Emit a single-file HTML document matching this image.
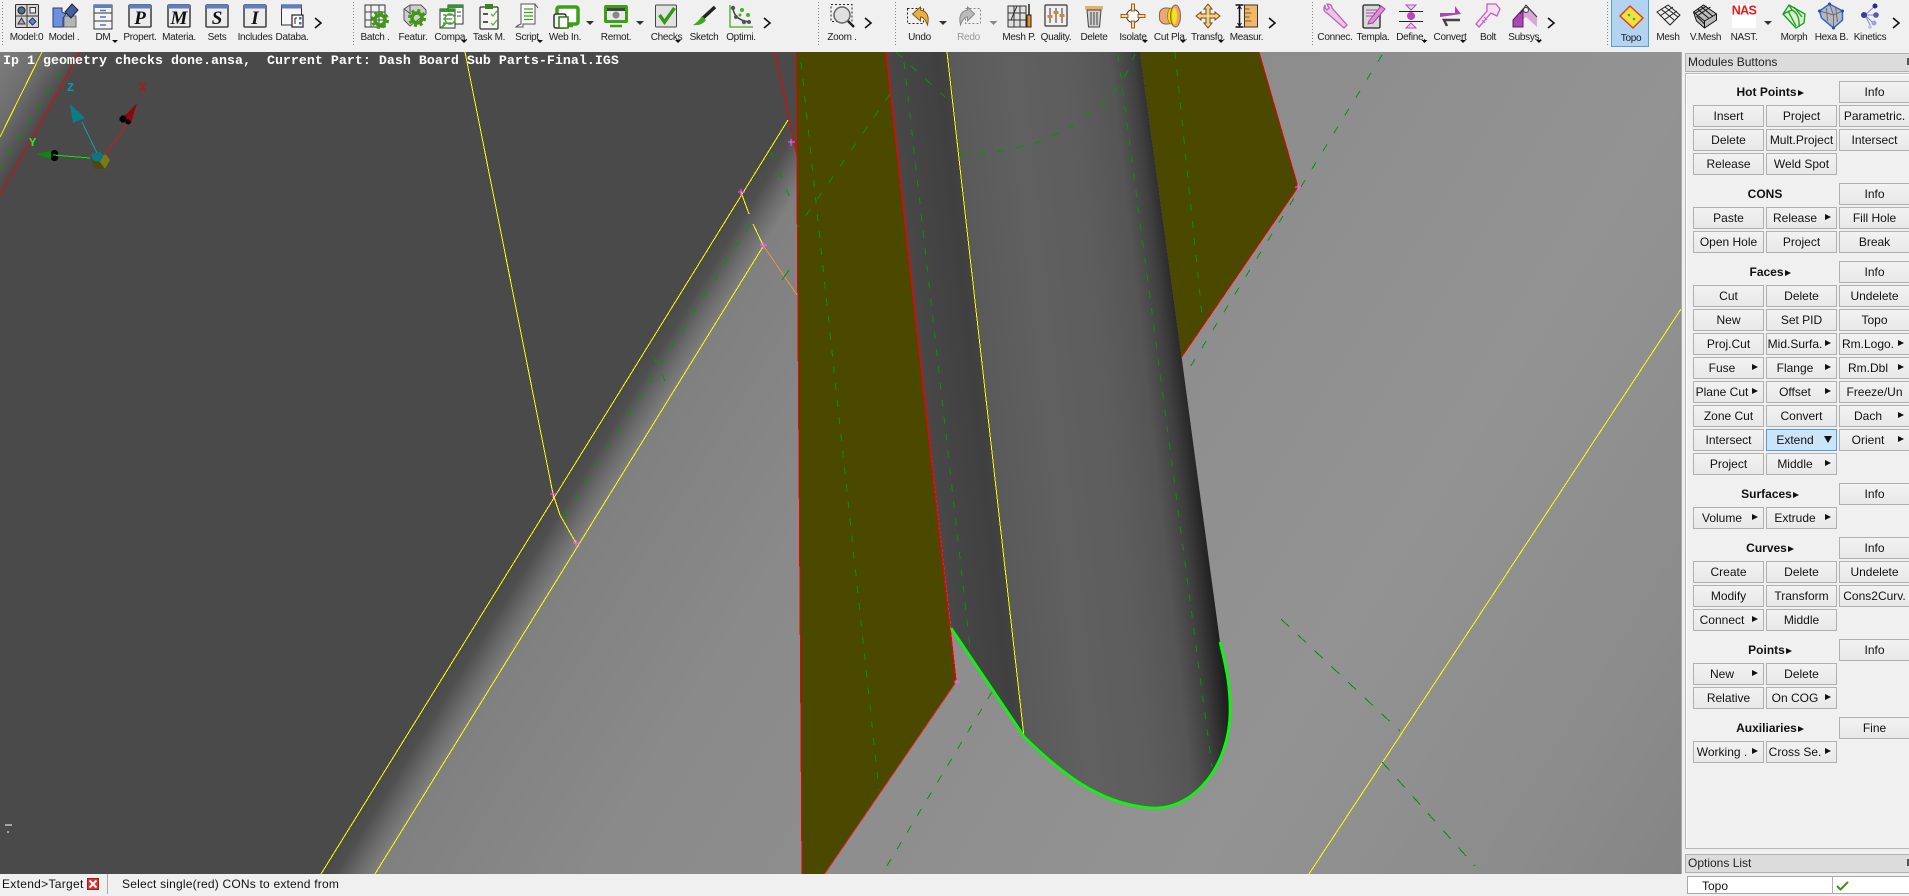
<!DOCTYPE html>
<html lang="en"><head><meta charset="utf-8"><title>ANSA</title>
<style>
html,body{margin:0;padding:0;width:1909px;height:896px;overflow:hidden;background:#f0f0f0;font-family:"Liberation Sans",sans-serif}
#tb{position:absolute;left:0;top:0;width:1909px;height:52px;background:#f0f0f0}
#tb text.l{font:10px "Liberation Sans",sans-serif;letter-spacing:-.3px;fill:#1c1c1c;text-anchor:middle}
#vp{position:absolute;left:0;top:52px;width:1681px;height:822px;overflow:hidden;background:#4a4a4a}
#msg{position:absolute;left:3px;top:2px;font:bold 13.33px/16px "Liberation Mono",monospace;color:#fff;white-space:pre}
.ax{position:absolute;font:bold 12px/12px "Liberation Mono",monospace}
#sb{position:absolute;left:0;top:874px;width:1681px;height:22px;background:#f0f0f0;font-size:12px;color:#111}
#sb span{position:absolute;top:3px;line-height:15px;white-space:nowrap}
#pn{position:absolute;left:1681px;top:52px;width:228px;height:844px;background:#f0f0f0;overflow:hidden}
.tt{position:absolute;left:4px;width:230px;height:19px;box-sizing:border-box;background:#dcdcdc;border:1px solid #b0b0b0;font-size:12px;line-height:17px;padding-left:2px;color:#222}
.fr{position:absolute;left:4px;top:21px;width:230px;height:776px;box-sizing:border-box;border:1px solid #b8b8b8;box-shadow:inset 1px 1px 0 #fff}
.x{position:absolute;box-sizing:border-box;height:22px;width:71px;border:1px solid #b0b0b0;background:linear-gradient(#f2f2f2,#e8e8e8);font-size:12px;line-height:20px;text-align:center;color:#111;white-space:nowrap;overflow:hidden}
.c1{left:12px}.c2{left:85px}.c3{left:158px}
.a{padding-right:13px}
.a::after{content:"";position:absolute;right:5px;top:6px;border-left:6px solid #111;border-top:3.5px solid transparent;border-bottom:3.5px solid transparent}
.on{background:#cce4f7;border-color:#4a9fe4}
.on::after{right:4px;top:6px;border-top:7px solid #111;border-left:4px solid transparent;border-right:4px solid transparent;border-bottom:0}
.h{position:absolute;left:12px;height:22px;font-size:12px;font-weight:bold;line-height:22px;text-align:center;color:#111;white-space:nowrap}
.h i{display:inline-block;border-left:6px solid #111;border-top:3.5px solid transparent;border-bottom:3.5px solid transparent;margin-left:1px}
</style></head><body>

<svg id="tb" width="1909" height="52" viewBox="0 0 1909 52" xmlns="http://www.w3.org/2000/svg">
<defs>
<g id="gear"><circle r="7.500" fill="none" stroke="#3f9a12" stroke-width="3" stroke-dasharray="3 2.900"/><circle r="5" fill="none" stroke="#3f9a12" stroke-width="3.500"/></g>
<path id="chev" d="M-3 -5L3 0L-3 5" fill="none" stroke="#111" stroke-width="1.600"/>
<path id="sm" d="M-3 0H3L0 3Z" fill="#111"/>
<path id="big" d="M-4 0H4L0 4Z" fill="#333"/>
</defs>
<g fill="none" stroke="#888" stroke-width="1" stroke-dasharray="1 2">
<path d="M2.500 2V46M353.500 2V46M818.500 2V46M895.500 2V46M1312.500 2V46M1607.500 2V46"/>
</g>
<!-- Model:0 -->
<g transform="translate(26.500 0)"><rect x="-11" y="4.500" width="23" height="23" rx="1" fill="#d4d4d4" stroke="#333"/><path d="M.5 4.500V27.500M-11 16H12" stroke="#333"/><circle cx="-5" cy="10.500" r="3.500" fill="#556a90" stroke="#222"/><rect x="3.500" y="7.500" width="5.500" height="5.500" fill="#eee" stroke="#333"/><path d="M-5 18L-8.500 24H-1.500Z" fill="#aaa" stroke="#333"/><path d="M6 18L9.500 21.500L6 25L2.500 21.500Z" fill="#5a86d8" stroke="#335"/></g>
<!-- Model . -->
<g transform="translate(64 0)"><path d="M0 16H12V27H0Z" fill="#b5b5b5" stroke="#666"/><path d="M-11 8H-2V12L2 14L-1 18V27H-11Z" fill="#6d8fe0" stroke="#2a3c70"/><path d="M1 12L8 4L14 10L7 18Z" fill="#40609f" stroke="#223"/></g>
<!-- DM -->
<g transform="translate(103 0)"><rect x="-9" y="5" width="18" height="24" fill="#f4f4f4" stroke="#333"/><rect x="-9" y="5" width="18" height="3" fill="#5a7fc8"/><path d="M-9 13H9M-9 21H9" stroke="#333"/><path d="M-3 10.500H3M-3 17H3M-3 25H3" stroke="#4a78c8" stroke-width="1.500"/></g>
<!-- P M S I -->
<g font-family="Liberation Serif,serif" font-weight="bold" font-style="italic" font-size="19" text-anchor="middle" fill="#111">
<g transform="translate(140 0)"><rect x="-11" y="5" width="22" height="22" rx="1" fill="#ececec" stroke="#222" stroke-width="1.300"/><rect x="-11" y="5" width="22" height="3.500" fill="#5a7fc8"/><text y="24">P</text></g>
<g transform="translate(179 0)"><rect x="-11" y="5" width="22" height="22" rx="1" fill="#ececec" stroke="#222" stroke-width="1.300"/><rect x="-11" y="5" width="22" height="3.500" fill="#5a7fc8"/><text y="24">M</text></g>
<g transform="translate(217 0)"><rect x="-11" y="5" width="22" height="22" rx="1" fill="#ececec" stroke="#222" stroke-width="1.300"/><rect x="-11" y="5" width="22" height="3.500" fill="#5a7fc8"/><text y="24">S</text></g>
<g transform="translate(255 0)"><rect x="-11" y="5" width="22" height="22" rx="1" fill="#ececec" stroke="#222" stroke-width="1.300"/><rect x="-11" y="5" width="22" height="3.500" fill="#5a7fc8"/><text y="24">I</text></g>
</g>
<!-- Databa -->
<g transform="translate(292 0)"><rect x="-10.500" y="5" width="20" height="20" fill="#f6f6f6" stroke="#333"/><rect x="-10.500" y="5" width="20" height="3.500" fill="#5a7fc8"/><rect x="0" y="15" width="11" height="12" fill="#fff" stroke="#222" stroke-width="1.200"/><path d="M3 18V24M3 18H5" stroke="#222"/><rect x="7" y="17" width="2.500" height="2.500" fill="#3a6ac8"/><rect x="7" y="22" width="2.500" height="2.500" fill="#3a6ac8"/></g>
<use href="#chev" x="318" y="23"/>
<!-- Batch -->
<g transform="translate(375 0)"><rect x="-10" y="5" width="20" height="22" fill="#f2f2f2" stroke="#333"/><path d="M-10 12H10M-10 20H10M-4 5V27M4 5V27" stroke="#444"/><use href="#gear" x="5" y="20"/></g>
<!-- Featur -->
<g transform="translate(413 0)"><path d="M-9 9L-3 5H8L13 10V14L-3 26L-9 20Z" fill="#cfcfcf" stroke="#555"/><path d="M-3 5V14M-9 9L-2 14" stroke="#555"/><use href="#gear" x="4" y="18"/></g>
<!-- Compa -->
<g transform="translate(451 0)"><rect x="-3" y="5" width="15" height="19" fill="#fff" stroke="#333"/><rect x="-3" y="5" width="15" height="3" fill="#2f9a2a"/><rect x="-11" y="9" width="15" height="19" fill="#fff" stroke="#333"/><rect x="-11" y="9" width="15" height="3" fill="#2f9a2a"/><path d="M-8 15H1M-8 19H1M-8 23H1M6 12H10M6 16H10" stroke="#444"/><circle cx="-1" cy="19" r="5" fill="none" stroke="#3fb020" stroke-width="1.500"/><path d="M-5 23L-10 28" stroke="#3fb020" stroke-width="2"/></g>
<!-- Task M -->
<g transform="translate(489 0)"><rect x="-9" y="7" width="18" height="22" rx="1" fill="#f4f4f4" stroke="#333" stroke-width="1.200"/><rect x="-4" y="4" width="8" height="5" fill="#2f8a1c"/><path d="M-6 14H-1M-6 22H-1" stroke="#222" stroke-width="1.500"/><path d="M2 14L4 16L8 11M2 23L4 25L8 20" fill="none" stroke="#5bb53a" stroke-width="1.300"/></g>
<!-- Script -->
<g transform="translate(527 0)"><path d="M-6 4H8V24H-4V27H-11Q-9 25 -6 24Z" fill="#fbfbfb" stroke="#555"/><path d="M8 4L11 8" stroke="#555"/><path d="M-3 9H6M-3 12.500H6M-3 16H6M-3 19.500H6" stroke="#3fa020" stroke-width="1.200"/></g>
<!-- Web In -->
<g transform="translate(565 0)"><rect x="-8" y="7" width="21" height="17" rx="2" fill="#fff" stroke="#3aa015" stroke-width="3.500"/><path d="M-4 26H8" stroke="#3aa015" stroke-width="2.500"/><rect x="-11" y="14" width="12" height="14" rx="2" fill="#f4f4f4" stroke="#333" stroke-width="1.500"/><rect x="-6" y="17" width="9" height="11" fill="#fff" stroke="#2b7a10" stroke-width="1.500"/></g>
<use href="#big" x="590" y="21"/>
<!-- Remot -->
<g transform="translate(616 0)"><rect x="-12" y="5" width="24" height="18" rx="2" fill="#3aa015"/><rect x="-9" y="8" width="18" height="12" fill="#e8e8e8"/><rect x="-9" y="8" width="18" height="3" fill="#444"/><circle cy="15" r="3.500" fill="#888"/><path d="M-6 26H6" stroke="#3aa015" stroke-width="2.500"/></g>
<use href="#big" x="640" y="21"/>
<!-- Checks -->
<g transform="translate(666.500 0)"><rect x="-11" y="5" width="21" height="22" rx="1" fill="#e2e2e2" stroke="#444"/><path d="M-7 15L-2 22L8 8" fill="none" stroke="#2f9a12" stroke-width="3.500"/></g>
<!-- Sketch -->
<g transform="translate(704 0)"><path d="M11 7L-1 18" stroke="#222" stroke-width="3.500"/><path d="M-2 16L2 20Q-2 26 -11 25Q-6 22 -2 16Z" fill="#3fa81c"/></g>
<!-- Optimi -->
<g transform="translate(741 0)"><path d="M-11 5V27H12" fill="none" stroke="#4aa82a" stroke-width="1.300"/><path d="M-8 9Q-6 20 8 22" fill="none" stroke="#444" stroke-width="1.500"/><g fill="#555"><circle cx="-8" cy="8" r="2.200"/><circle cx="-5" cy="17" r="2"/><circle cx="3" cy="22" r="2.200"/><circle cx="8" cy="22" r="2"/></g><g fill="#46b020"><circle cx="1" cy="10" r="2"/><circle cx="7" cy="15" r="2"/><circle cx="-1" cy="15" r="1.500"/></g></g>
<use href="#chev" x="767" y="23"/>
<!-- Zoom -->
<g transform="translate(842 0)"><rect x="-11" y="4.500" width="21" height="17" fill="none" stroke="#222" stroke-dasharray="2 2"/><path d="M5 20L12 27" stroke="#222" stroke-width="2.500"/><circle cy="15" r="8" fill="#e0e0e0" stroke="#666" stroke-width="1.500"/></g>
<use href="#chev" x="868" y="23"/>
<!-- Undo -->
<g transform="translate(919.500 0)"><rect x="-12" y="8.500" width="16" height="15" fill="none" stroke="#222" stroke-dasharray="2 2"/><path d="M-7 14L1 7V10Q11 12 8 25Q5 17 1 17V21Z" fill="#e8b040" stroke="#7a5a1a"/></g>
<use href="#big" x="943" y="21"/>
<!-- Redo -->
<g transform="translate(968.500 0)"><rect x="-3" y="8.500" width="15" height="15" fill="none" stroke="#888" stroke-dasharray="2 2"/><path d="M6 14L-1 7V10Q-11 12 -8 25Q-5 17 -1 17V21Z" fill="#bbb" stroke="#888"/></g>
<use href="#big" x="993.500" y="21" opacity=".55"/>
<!-- Mesh P -->
<g transform="translate(1019 0)"><rect x="-11" y="6" width="18" height="21" fill="#e0e0e0" stroke="#333"/><path d="M-11 13H7M-11 20H7M-5 6V27M1 6V27M-8 20L-2 6" stroke="#333"/><path d="M10 4V15" stroke="#222" stroke-width="1.500"/><rect x="8" y="15" width="4" height="12" fill="#e89020" stroke="#222"/></g>
<!-- Quality -->
<g transform="translate(1056 0)"><rect x="-11" y="5" width="22" height="21" rx="1" fill="#f0f0f0" stroke="#333" stroke-width="1.200"/><path d="M-6 8V23M0 8V23M6 8V23" stroke="#333"/><rect x="-8.500" y="15" width="5" height="3" fill="#d08838"/><rect x="-2.500" y="11" width="5" height="3" fill="#d08838"/><rect x="3.500" y="14" width="5" height="3" fill="#d08838"/></g>
<!-- Delete -->
<g transform="translate(1094 0)"><rect x="-9" y="6" width="18" height="3.500" fill="#e8b060"/><path d="M-7 10H7L5.500 27H-5.500Z" fill="#d0d0d0" stroke="#444"/><path d="M-3 12V25M0 12V25M3 12V25" stroke="#444"/></g>
<!-- Isolate -->
<g transform="translate(1133 0)"><circle cy="16" r="6.500" fill="#fff" stroke="#333"/><g fill="#f8d8a0" stroke="#a06010"><path d="M-1.500 4H1.500V11H-1.500ZM-1.500 21H1.500V28H-1.500ZM-12 14.500H-5V17.500H-12ZM5 14.500H12V17.500H5Z"/></g></g>
<!-- Cut Pla -->
<g transform="translate(1170.500 0)"><rect x="-11" y="8" width="14" height="16" rx="6" fill="#e8a878" stroke="#864"/><ellipse cx="1" cy="16" rx="4" ry="8" fill="#f4e800" stroke="#a80"/><ellipse cx="5" cy="16" rx="5" ry="11" fill="#e8a070" stroke="#864"/><ellipse cx="4" cy="16" rx="2.500" ry="8" fill="#f4e800"/></g>
<!-- Transfo -->
<g transform="translate(1208 0)"><path d="M0 4L4 9H2V14H7V12L12 16L7 20V18H2V23H4L0 28L-4 23H-2V18H-7V20L-12 16L-7 12V14H-2V9H-4Z" fill="#f6d08a" stroke="#704a10"/></g>
<!-- Measur -->
<g transform="translate(1246.500 0)"><path d="M-11 5H-3M-11 27H-3M-7 5V27" stroke="#111" stroke-width="1.500"/><path d="M-9 9L-7 6L-5 9M-9 23L-7 26L-5 23" fill="none" stroke="#111"/><rect x="-2" y="5" width="13" height="22" fill="#f0b868" stroke="#333"/><path d="M-2 9H3M-2 13H5M-2 17H3M-2 21H5" stroke="#8a5a10"/></g>
<use href="#chev" x="1272" y="23"/>
<!-- Connec -->
<g transform="translate(1335 0)"><path d="M-10 5Q-13 11 -8 13L9 28L12 25L-3 8Q-3 4 -8 4L-6 8L-8 10L-10 8Z" fill="#e8c8e4" stroke="#c060c0" stroke-width="1.300"/></g>
<!-- Templa -->
<g transform="translate(1373 0)"><rect x="-10" y="5" width="17" height="23" rx="1.500" fill="#d8d8d8" stroke="#222" stroke-width="1.300"/><path d="M-7 10H4M-7 13H2M-7 16H0" stroke="#b050b8"/><path d="M-4 21L8 6L12 9L0 23L-5 24Z" fill="#e090d8" stroke="#a040a8"/></g>
<!-- Define -->
<g transform="translate(1411 0)"><path d="M-5 5H5L0 10Z" fill="#f0d0ec" stroke="#b050b8"/><path d="M-5 28H5L0 23Z" fill="#f0d0ec" stroke="#b050b8"/><path d="M-12 11.500H12M-12 21.500H12" stroke="#222"/><circle cy="16" r="4" fill="#b848b8"/></g>
<!-- Convert -->
<g transform="translate(1450 0)"><path d="M-10 13H5V6L11 14L-10 17Z" fill="#a848b0"/><path d="M10 20H-6L-3 26" fill="none" stroke="#444" stroke-width="2.500"/></g>
<!-- Bolt -->
<g transform="translate(1488 0)"><path d="M-1 4L8 4L12 9L9 16L3 13L-9 27L-12 24L-1 11Z" fill="#f4e0f0" stroke="#c060c0" stroke-width="1.300"/><path d="M-6 20L-3 23M-4 17L-1 20" stroke="#c060c0"/></g>
<!-- Subsys -->
<g transform="translate(1525 0)"><path d="M-12 27L-12 20L1 6L12 17V27L1 17Z" fill="#d8a8d8"/><path d="M-12 27V20L-2 9V27Z" fill="#a848b0" stroke="#602068"/><path d="M-5 14L1 5L12 17" fill="none" stroke="#333"/><circle cx="1" cy="10" r="2.500" fill="#eee" stroke="#444"/></g>
<use href="#chev" x="1551" y="23"/>
<!-- Topo -->
<rect x="1611.500" y="-1" width="37" height="47.500" fill="#b3d4f0" stroke="#5a9ed8"/>
<g transform="translate(1631 0)"><path d="M-11 16L-1 6L12 18L2 28Z" fill="#f0e040" stroke="#e04020" stroke-width="1.500"/><circle cx="-2" cy="15" r="1.300" fill="#40b040"/><circle cx="3" cy="19" r="1.300" fill="#40b040"/></g>
<!-- Mesh -->
<g transform="translate(1668 0)" fill="none" stroke="#222"><path d="M-11 12L0 5L12 15L2 25Z" fill="#eee"/><path d="M-7 9L6 20M-3 7L10 17M-8 16L5 7M-4 20L9 11"/></g>
<!-- V.Mesh -->
<g transform="translate(1705.500 0)" fill="none" stroke="#111"><path d="M-12 12L-2 5L11 14V20L-1 28L-9 21Z" fill="#bbb"/><path d="M-12 12L-1 21V28M-1 21L11 14M-8 9L3 18M-4 7L7 16M-9 16L-1 24M5 7L-7 15M1 6L-10 13"/></g>
<!-- NAST -->
<rect x="1732" y="4" width="24" height="24" fill="#fff"/>
<text x="1744" y="14.500" text-anchor="middle" font-family="Liberation Sans,sans-serif" font-weight="bold" font-size="12.500" letter-spacing="-.6" fill="#f01818">NAS</text>
<use href="#big" x="1768" y="21"/>
<!-- Morph -->
<g transform="translate(1794 0)" fill="none" stroke="#1c9a20" stroke-width="1.300"><path d="M-11 14L-5 5L11 14L10 23L2 28L-11 14Z" fill="#d8f0d0"/><path d="M-5 5L-2 10Q6 14 5 27M-11 14L-2 10M-6 11L2 26M0 7L8 17"/></g>
<!-- Hexa B -->
<g transform="translate(1831.500 0)"><path d="M-12 11L-2 4L11 11V20L2 28L-10 18Z" fill="#b8b8b8" stroke="#2a6ad0" stroke-width="1.500"/><path d="M-2 4L2 15L2 28M2 15L11 11M2 15L-12 11M-5 8L-4 21M4 7L6 22" stroke="#6a6a8a" fill="none"/><g fill="#1a4ab0"><circle cx="-12" cy="11" r="1.500"/><circle cx="11" cy="11" r="1.500"/><circle cx="2" cy="28" r="1.500"/><circle cx="-2" cy="4" r="1.500"/></g></g>
<!-- Kinetics -->
<g transform="translate(1870 0)"><path d="M-5 15L5 6M-5 15H6M-5 15L4 24M-5 15L1 27" stroke="#8a8ad0"/><circle cx="-6" cy="15" r="3" fill="#3a3a9a"/><circle cx="5" cy="6" r="2.500" fill="#2a2a90"/><circle cx="6" cy="15" r="2.800" fill="#5a5ab0"/><circle cx="4" cy="23" r="2.500" fill="#a0a0d8"/><circle cx="0" cy="27" r="1.800" fill="#c0c0e4"/></g>
<use href="#chev" x="1896" y="23"/>
<!-- labels -->
<g>
<text class="l" x="26.500" y="40">Model:0</text><text class="l" x="64" y="40">Model .</text><text class="l" x="103" y="40">DM</text><text class="l" x="140" y="40">Propert.</text><text class="l" x="179" y="40">Materia.</text><text class="l" x="217" y="40">Sets</text><text class="l" x="255" y="40">Includes</text><text class="l" x="292" y="40">Databa.</text>
<text class="l" x="375" y="40">Batch .</text><text class="l" x="413" y="40">Featur.</text><text class="l" x="451" y="40">Compa.</text><text class="l" x="489" y="40">Task M.</text><text class="l" x="527" y="40">Script</text><text class="l" x="565" y="40">Web In.</text><text class="l" x="616" y="40">Remot.</text>
<text class="l" x="666.500" y="40">Checks</text><text class="l" x="704" y="40">Sketch</text><text class="l" x="741" y="40">Optimi.</text><text class="l" x="842" y="40">Zoom .</text><text class="l" x="919.500" y="40">Undo</text><text class="l" x="968.500" y="40" style="fill:#999">Redo</text><text class="l" x="1019" y="40">Mesh P.</text><text class="l" x="1056" y="40">Quality.</text><text class="l" x="1094" y="40">Delete</text><text class="l" x="1133" y="40">Isolate</text><text class="l" x="1170.500" y="40">Cut Pla.</text><text class="l" x="1208" y="40">Transfo.</text><text class="l" x="1246.500" y="40">Measur.</text>
<text class="l" x="1335" y="40">Connec.</text><text class="l" x="1373" y="40">Templa.</text><text class="l" x="1411" y="40">Define.</text><text class="l" x="1450" y="40">Convert</text><text class="l" x="1488" y="40">Bolt</text><text class="l" x="1525" y="40">Subsys.</text>
<text class="l" x="1631" y="41">Topo</text><text class="l" x="1668" y="40">Mesh</text><text class="l" x="1705.500" y="40">V.Mesh</text><text class="l" x="1744" y="40">NAST.</text><text class="l" x="1794" y="40">Morph</text><text class="l" x="1831.500" y="40">Hexa B.</text><text class="l" x="1870" y="40">Kinetics</text>
</g>
<use href="#sm" x="115" y="40"/><use href="#sm" x="464" y="40"/><use href="#sm" x="540" y="40"/><use href="#sm" x="678" y="40"/><use href="#sm" x="1145" y="40"/><use href="#sm" x="1183" y="40"/><use href="#sm" x="1221" y="40"/><use href="#sm" x="1424.500" y="40"/><use href="#sm" x="1463" y="40"/><use href="#sm" x="1539" y="40"/>
</svg>

<div id="vp">
<svg width="1681" height="822" viewBox="0 52 1681 822" xmlns="http://www.w3.org/2000/svg" style="position:absolute;left:0;top:0">
<defs>
<linearGradient id="bg" gradientUnits="userSpaceOnUse" x1="0" y1="0" x2="1605" y2="995">
<stop offset="0" stop-color="#8a8a8a"/><stop offset=".036" stop-color="#6c6c6c"/><stop offset=".053" stop-color="#4a4a4a"/>
<stop offset=".3885" stop-color="#4a4a4a"/><stop offset=".395" stop-color="#4f4f4f"/><stop offset=".404" stop-color="#6a6a6a"/><stop offset=".4126" stop-color="#808080"/>
<stop offset=".51" stop-color="#8a8a8a"/><stop offset=".78" stop-color="#939393"/><stop offset=".92" stop-color="#8c8c8c"/><stop offset="1" stop-color="#858585"/>
</linearGradient>
<linearGradient id="cy" gradientUnits="userSpaceOnUse" x1="880" y1="0" x2="1150" y2="-30">
<stop offset="0" stop-color="#484848"/><stop offset=".19" stop-color="#404040"/><stop offset=".225" stop-color="#424242"/><stop offset=".23" stop-color="#5a5a5a"/>
<stop offset=".45" stop-color="#606060"/><stop offset=".67" stop-color="#5d5d5d"/><stop offset=".82" stop-color="#555"/><stop offset=".9" stop-color="#404040"/><stop offset=".95" stop-color="#2c2c2c"/><stop offset="1" stop-color="#181818"/>
</linearGradient>
</defs>
<rect x="0" y="52" width="1681" height="822" fill="url(#bg)"/>
<path d="M886 52H1140L1181.600 357L1197 472L1220 642C1224 660 1230 680 1230 710C1230 765 1195 808 1155 808C1100 806 1058 770 1024.500 737L951 628Z" fill="url(#cy)"/>
<g shape-rendering="crispEdges" fill="none" stroke-width="1">
<path d="M775 52L796 152V52Z" fill="#4a4a4a" stroke="none"/>
<path d="M796 52H886L956 682L824.500 874H802Z" fill="#4b4800" stroke="none"/>
<path d="M1140 52H1259L1298 187L1181.600 357Z" fill="#4b4800" stroke="none"/>
<g stroke="#f00000">
<path d="M80 52L0 195"/>
<path d="M775 52L796 152M796 52L802 874"/>
<path d="M1259 52L1298 187L1181.600 357"/>
<path d="M956 682L824.500 874" stroke="#e02020"/>
<path d="M886 52L956 682" stroke-width="1.500"/>
</g>
<g stroke="#ffff00">
<path d="M42 52L0 137M788 120L321 874M764 245L375 874"/>
<path d="M465 52L553 494L560 515L576 543"/>
<path d="M741 192L749 214M753 224L763 245"/>
<path d="M947 52L1024 737"/>
<path d="M1681 309L1309 874"/>
</g>
<path d="M763 245L797 295" stroke="#f09040"/>
<g stroke="#009600">
<path d="M70 57L0 168" stroke-dasharray="8 10"/>
<path d="M750 224L557 528" stroke-dasharray="8 12"/>
<path d="M653 356L670 391M771 152L793 205" stroke-dasharray="8 12"/>
<path d="M801 62L879 790" stroke-dasharray="7 10"/>
<path d="M904 62L970 647" stroke-dasharray="7 10"/>
<path d="M1118 55L1212 767" stroke-dasharray="7 10"/>
<path d="M1175 52L1202 315" stroke-dasharray="7 10"/>
<path d="M1382 55L1184 377" stroke-dasharray="8 13"/>
<path d="M890 94L798 227" stroke-dasharray="8 12"/>
<path d="M896 52L945 97" stroke-dasharray="8 12"/>
<path d="M959 154L977 154L1008 150L1039 142L1071 127L1104 102L1120 85L1129 69L1135 54" stroke-dasharray="8 11"/>
<path d="M992 692L882 874" stroke-dasharray="8 11.500"/>
<path d="M1281 619L1400 731M1382 762L1475 866" stroke-dasharray="11 12" stroke="#008f00"/>
<path d="M782 280L789 270" />
</g>
<g stroke="#ff60ff">
<path d="M741 189V196M738 192H745M763 242V249M760 245H767M791 139V146M788 142H795M1298 184V190M1295 187H1301M553 491V498M550 494H557M576 540V547M573 543H580M956 680V684M954 682H960"/>
</g>
<path d="M5 825H12M7 832H9" stroke="#fff"/>
<g stroke="none">
<path d="M70 104L85 118L73 123Z" fill="#0a7d8a"/>
<path d="M137 103L131 124L122 118Z" fill="#8a0a0a"/>
<circle cx="123" cy="119" r="3.500" fill="#000"/><circle cx="128" cy="122" r="2.500" fill="#000"/>
<path d="M36 154L57 150V161Z" fill="#0a8a0a"/>
<rect x="51" y="150" width="7" height="11" rx="3" fill="#000"/>
<path d="M91 154L100 152L105 157L100 163L93 160Z" fill="#0a7585"/>
<path d="M105 153L110 160L105 169L100 162Z" fill="#7a7a10"/>
<path d="M91 160L100 162L105 169L95 169Z" fill="#4c4810"/>
</g>
<path d="M82 122L97 153" stroke="#10a0a8"/>
<path d="M127 124L105 155" stroke="#e01010"/>
<path d="M53 155L90 158" stroke="#00f000"/>
</g>
<path d="M1220 642C1224 660 1230 680 1230 710C1230 765 1195 808 1155 808C1100 806 1058 770 1024.500 737L951 628" fill="none" stroke="#00ff00" stroke-width="2.600"/>
</svg>
<div id="msg">Ip 1 geometry checks done.ansa,  Current Part: Dash Board Sub Parts-Final.IGS</div>
<div class="ax" style="left:67px;top:30px;color:#0a9aa8">Z</div>
<div class="ax" style="left:139px;top:30px;color:#c01010">X</div>
<div class="ax" style="left:29px;top:85px;color:#20f020">Y</div>
</div>

<div id="sb">
<span style="left:2px;letter-spacing:.3px">Extend&gt;Target</span>
<svg style="position:absolute;left:87px;top:4px" width="12" height="12" viewBox="0 0 12 12"><rect width="12" height="12" fill="#e03030" stroke="#611" /><path d="M2.500 2.500L9.500 9.500M9.500 2.500L2.500 9.500" stroke="#fff" stroke-width="2"/></svg>
<div style="position:absolute;left:107px;top:0;width:1px;height:20px;background:#aaa"></div>
<span style="left:122px;letter-spacing:.2px">Select single(red) CONs to extend from</span>
</div>

<div id="pn">
<div style="position:absolute;left:0;top:0;width:1px;height:822px;background:#a8a8a8"></div>
<div class="tt" style="top:1px">Modules Buttons</div>
<div style="position:absolute;left:226px;top:6px;width:2px;height:7px;background:#555"></div>
<div class="fr"></div>

<div class="h" style="top:29px;width:154px">Hot Points<i></i></div><div class="x c3" style="top:29px">Info</div>
<div class="x c1" style="top:53px">Insert</div><div class="x c2" style="top:53px">Project</div><div class="x c3" style="top:53px">Parametric.</div>
<div class="x c1" style="top:77px">Delete</div><div class="x c2" style="top:77px">Mult.Project</div><div class="x c3" style="top:77px">Intersect</div>
<div class="x c1" style="top:101px">Release</div><div class="x c2" style="top:101px">Weld Spot</div>

<div class="h" style="top:131px;width:144px">CONS</div><div class="x c3" style="top:131px">Info</div>
<div class="x c1" style="top:155px">Paste</div><div class="x c2 a" style="top:155px">Release</div><div class="x c3" style="top:155px">Fill Hole</div>
<div class="x c1" style="top:179px">Open Hole</div><div class="x c2" style="top:179px">Project</div><div class="x c3" style="top:179px">Break</div>

<div class="h" style="top:209px;width:154px">Faces<i></i></div><div class="x c3" style="top:209px">Info</div>
<div class="x c1" style="top:233px">Cut</div><div class="x c2" style="top:233px">Delete</div><div class="x c3" style="top:233px">Undelete</div>
<div class="x c1" style="top:257px">New</div><div class="x c2" style="top:257px">Set PID</div><div class="x c3" style="top:257px">Topo</div>
<div class="x c1" style="top:281px">Proj.Cut</div><div class="x c2 a" style="top:281px">Mid.Surfa.</div><div class="x c3 a" style="top:281px">Rm.Logo.</div>
<div class="x c1 a" style="top:305px">Fuse</div><div class="x c2 a" style="top:305px">Flange</div><div class="x c3 a" style="top:305px">Rm.Dbl</div>
<div class="x c1 a" style="top:329px">Plane Cut</div><div class="x c2 a" style="top:329px">Offset</div><div class="x c3" style="top:329px">Freeze/Un</div>
<div class="x c1" style="top:353px">Zone Cut</div><div class="x c2" style="top:353px">Convert</div><div class="x c3 a" style="top:353px">Dach</div>
<div class="x c1" style="top:377px">Intersect</div><div class="x c2 a on" style="top:377px">Extend</div><div class="x c3 a" style="top:377px">Orient</div>
<div class="x c1" style="top:401px">Project</div><div class="x c2 a" style="top:401px">Middle</div>

<div class="h" style="top:431px;width:154px">Surfaces<i></i></div><div class="x c3" style="top:431px">Info</div>
<div class="x c1 a" style="top:455px">Volume</div><div class="x c2 a" style="top:455px">Extrude</div>

<div class="h" style="top:485px;width:154px">Curves<i></i></div><div class="x c3" style="top:485px">Info</div>
<div class="x c1" style="top:509px">Create</div><div class="x c2" style="top:509px">Delete</div><div class="x c3" style="top:509px">Undelete</div>
<div class="x c1" style="top:533px">Modify</div><div class="x c2" style="top:533px">Transform</div><div class="x c3" style="top:533px">Cons2Curv.</div>
<div class="x c1 a" style="top:557px">Connect</div><div class="x c2" style="top:557px">Middle</div>

<div class="h" style="top:587px;width:154px">Points<i></i></div><div class="x c3" style="top:587px">Info</div>
<div class="x c1 a" style="top:611px">New</div><div class="x c2" style="top:611px">Delete</div>
<div class="x c1" style="top:635px">Relative</div><div class="x c2 a" style="top:635px">On COG</div>

<div class="h" style="top:665px;width:154px">Auxiliaries<i></i></div><div class="x c3" style="top:665px">Fine</div>
<div class="x c1 a" style="top:689px">Working .</div><div class="x c2 a" style="top:689px">Cross Se.</div>

<div class="tt" style="top:802px">Options List</div>
<div style="position:absolute;left:226px;top:807px;width:2px;height:7px;background:#555"></div>
<div style="position:absolute;left:6px;top:824px;width:230px;height:18px;box-sizing:border-box;background:#fff;border:1px solid #a8a8a8;font-size:12px;line-height:18px;padding-left:14px;color:#111">Topo</div>
<div style="position:absolute;left:151px;top:824px;width:1px;height:18px;background:#b0b0b0"></div>
<svg style="position:absolute;left:155px;top:829px" width="13" height="10" viewBox="0 0 13 10"><path d="M1 5L4.500 8.500L12 1" fill="none" stroke="#3f8f14" stroke-width="2"/></svg>
</div>
</body></html>
